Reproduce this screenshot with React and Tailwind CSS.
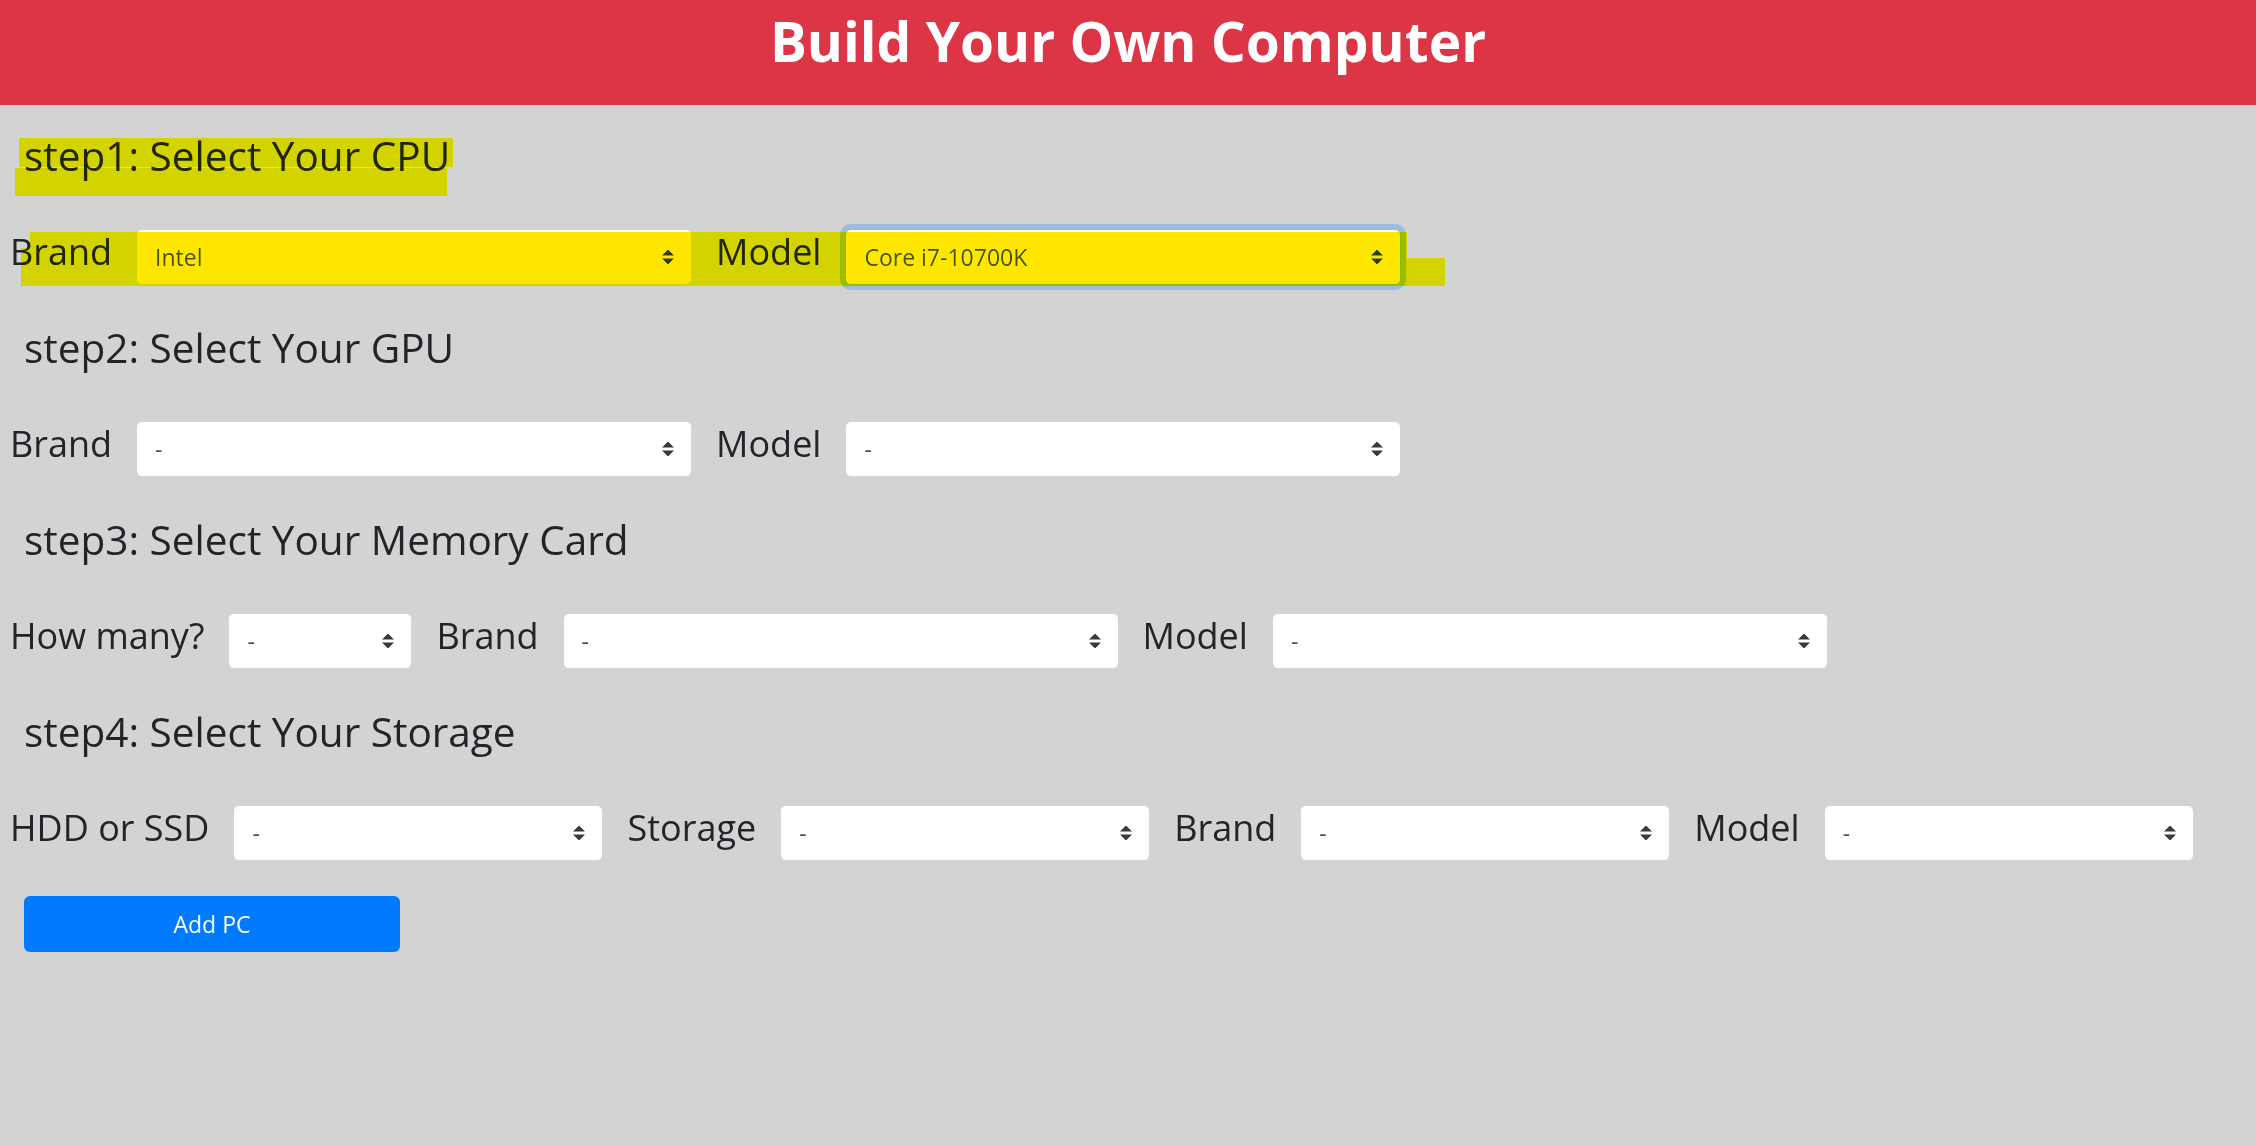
import React from "react";

// bootstrap-ish custom select with the double arrow
const Select = ({ w, value = "-", focus }) => (
  <div className={`relative shrink-0 h-[56px] ${w}`}>
    <select
      defaultValue={value}
      className={
        "appearance-none w-full h-full rounded-[6px] bg-white pl-[18px] pr-[48px] text-[23px] text-[#495057] outline-none " +
        (focus
          ? "border border-[#80bdff] shadow-[0_0_0_5px_rgba(0,123,255,0.25)]"
          : "border border-[#ced4da]")
      }
    >
      <option>{value}</option>
    </select>
    <svg
      viewBox="0 0 4 5"
      className="pointer-events-none absolute right-[18px] top-1/2 -translate-y-1/2 w-[12px] h-[15px]"
    >
      <path d="M2 0L0 2h4zm0 5L0 3h4z" fill="#343a40" />
    </svg>
  </div>
);

const Label = ({ children }) => (
  <h4 className="shrink-0 text-[36px] font-medium leading-[42px] mb-[11px] text-[#212529]">{children}</h4>
);

const Step = ({ children }) => (
  <h3 className="pl-[24px] text-[40.5px] font-medium leading-[48px] text-[#212529]">{children}</h3>
);

const Row = ({ children }) => (
  <div className="flex items-center gap-6 pl-[10px] h-[56px] mt-[49px] mb-[39px]">{children}</div>
);

export default function App() {
  return (
    <div className="relative min-h-screen bg-[#d3d3d3] font-['Open_Sans',sans-serif] text-[#212529]">
      <header className="h-[105px] bg-[#dc3545] pt-[8px]">
        <h1 className="text-center text-white font-bold text-[55px] leading-[1.2]">Build Your Own Computer</h1>
      </header>

      <main className="pt-[27px]">
        <Step>step1: Select Your CPU</Step>
        <Row>
          <Label>Brand</Label>
          <Select w="w-[556px]" value="Intel" />
          <Label>Model</Label>
          <Select w="w-[556px]" value="Core i7-10700K" focus />
        </Row>

        <Step>step2: Select Your GPU</Step>
        <Row>
          <Label>Brand</Label>
          <Select w="w-[556px]" />
          <Label>Model</Label>
          <Select w="w-[556px]" />
        </Row>

        <Step>step3: Select Your Memory Card</Step>
        <Row>
          <Label>How many?</Label>
          <Select w="w-[184px]" />
          <Label>Brand</Label>
          <Select w="w-[556px]" />
          <Label>Model</Label>
          <Select w="w-[556px]" />
        </Row>

        <Step>step4: Select Your Storage</Step>
        <Row>
          <Label>HDD or SSD</Label>
          <Select w="w-[370px]" />
          <Label>Storage</Label>
          <Select w="w-[370px]" />
          <Label>Brand</Label>
          <Select w="w-[370px]" />
          <Label>Model</Label>
          <Select w="w-[370px]" />
        </Row>

        <button className="ml-[24px] mt-[-4px] w-[376px] h-[56px] rounded-[6px] bg-[#007bff] text-white text-[23px]">
          Add PC
        </button>
      </main>

      {/* highlighter marks drawn over step 1 */}
      <div className="pointer-events-none absolute left-[19px] top-[138px] w-[434px] h-[29px] bg-[#ffe600] mix-blend-darken" />
      <div className="pointer-events-none absolute left-[15px] top-[168px] w-[432px] h-[28px] bg-[#ffe600] mix-blend-darken" />
      <div className="pointer-events-none absolute left-[30px] top-[232px] w-[1377px] h-[54px] bg-[#ffe600] mix-blend-darken" />
      <div className="pointer-events-none absolute left-[21px] top-[248px] w-[9px] h-[38px] bg-[#ffe600] mix-blend-darken" />
      <div className="pointer-events-none absolute left-[1407px] top-[258px] w-[38px] h-[28px] bg-[#ffe600] mix-blend-darken" />
    </div>
  );
}
